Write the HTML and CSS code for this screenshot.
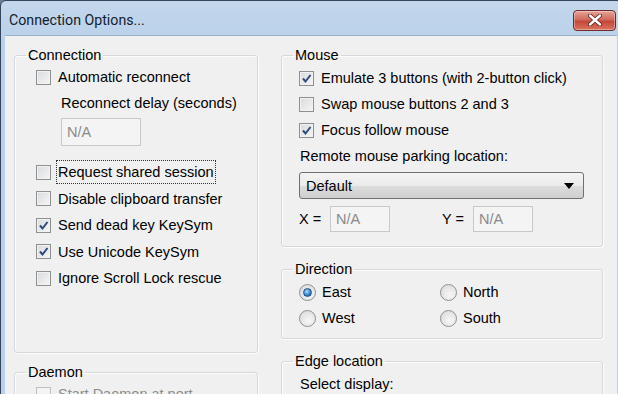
FILE: index.html
```html
<!DOCTYPE html>
<html lang="en">
<head>
    <meta charset="UTF-8">
    <title>Connection Options...</title>
    <link rel="stylesheet" href="styles.css">
</head>
<body>
    <div class="window">
        <div class="titlebar">
            <span class="title">Connection Options...</span>
            <span class="close">
                <svg width="20" height="12" viewBox="0 0 20 12">
                    <path d="M5 1.5 L15 10.5 M15 1.5 L5 10.5" stroke="#5a1e1e" stroke-width="4" stroke-linecap="round"/>
                    <path d="M5 1.5 L15 10.5 M15 1.5 L5 10.5" stroke="#fff" stroke-width="2.4" stroke-linecap="round"/>
                </svg>
            </span>
        </div>

        <div class="client">
            <!-- left column -->
            <div class="col">
                <fieldset class="group group-connection">
                    <legend>Connection</legend>
                    <div class="group-body conn-body">
                        <label class="row"><span class="box"></span>Automatic reconnect</label>
                        <div class="row indent">Reconnect delay (seconds)</div>
                        <div class="indent"><span class="field field-delay">N/A</span></div>
                        <label class="row row-shared"><span class="box"></span><span class="focus">Request shared session</span></label>
                        <label class="row row-tight"><span class="box"></span>Disable clipboard transfer</label>
                        <label class="row row-tight"><span class="box checked"><svg width="13" height="13" viewBox="0 0 13 13"><path d="M3 6.5 L5.5 9.5 L10.5 3" fill="none" stroke="#2e4a7a" stroke-width="2"/></svg></span>Send dead key KeySym</label>
                        <label class="row row-tight"><span class="box checked"><svg width="13" height="13" viewBox="0 0 13 13"><path d="M3 6.5 L5.5 9.5 L10.5 3" fill="none" stroke="#2e4a7a" stroke-width="2"/></svg></span>Use Unicode KeySym</label>
                        <label class="row row-tight"><span class="box"></span>Ignore Scroll Lock rescue</label>
                    </div>
                </fieldset>

                <fieldset class="group group-daemon">
                    <legend>Daemon</legend>
                    <div class="group-body conn-body">
                        <label class="row disabled"><span class="box"></span>Start Daemon at port</label>
                    </div>
                </fieldset>
            </div>

            <!-- right column -->
            <div class="col">
                <fieldset class="group group-mouse">
                    <legend>Mouse</legend>
                    <div class="group-body mouse-body">
                        <label class="row"><span class="box checked"><svg width="13" height="13" viewBox="0 0 13 13"><path d="M3 6.5 L5.5 9.5 L10.5 3" fill="none" stroke="#2e4a7a" stroke-width="2"/></svg></span>Emulate 3 buttons (with 2-button click)</label>
                        <label class="row"><span class="box"></span>Swap mouse buttons 2 and 3</label>
                        <label class="row"><span class="box checked"><svg width="13" height="13" viewBox="0 0 13 13"><path d="M3 6.5 L5.5 9.5 L10.5 3" fill="none" stroke="#2e4a7a" stroke-width="2"/></svg></span>Focus follow mouse</label>
                        <div class="row text-row">Remote mouse parking location:</div>
                        <div class="select">
                            <span>Default</span>
                            <svg width="10" height="6" viewBox="0 0 10 6"><path d="M0 0 H10 L5 6 Z" fill="#000"/></svg>
                        </div>
                        <div class="coords">
                            <div class="coord"><span class="coord-label">X =</span><span class="field field-coord">N/A</span></div>
                            <div class="coord"><span class="coord-label">Y =</span><span class="field field-coord">N/A</span></div>
                        </div>
                    </div>
                </fieldset>

                <fieldset class="group group-direction">
                    <legend>Direction</legend>
                    <div class="group-body mouse-body radios">
                        <label class="row"><span class="radio on"></span>East</label>
                        <label class="row"><span class="radio"></span>North</label>
                        <label class="row"><span class="radio"></span>West</label>
                        <label class="row"><span class="radio"></span>South</label>
                    </div>
                </fieldset>

                <fieldset class="group group-edge">
                    <legend>Edge location</legend>
                    <div class="group-body mouse-body">
                        <div class="row text-row">Select display:</div>
                    </div>
                </fieldset>
            </div>
        </div>
    </div>
</body>
</html>
```

FILE: styles.css
```css
body {
    margin: 0;
    background: #6d7f95;
    font-family: "Liberation Sans", Arial, sans-serif;
    font-size: 14.5px;
    color: #000;
    overflow: hidden;
}
.window {
    width: 612px;
    height: 420px;
    border: 1px solid #34455a;
    border-radius: 6px 6px 0 0;
    background: linear-gradient(to bottom, #c3d7ec, #b9d1ea 40px);
    padding: 0 5px 0 4px;
    display: flex;
    flex-direction: column;
}
.titlebar {
    height: 34px;
    display: flex;
    align-items: center;
    justify-content: space-between;
    flex-shrink: 0;
}
.title {
    font-family: Roboto, "Liberation Sans", sans-serif;
    font-size: 14.2px;
    color: #14202e;
    padding-left: 4px;
    margin-top: 4px;
}
.close {
    width: 41px;
    height: 19px;
    margin-top: 4px;
    margin-right: 1px;
    border: 1px solid #6b2a2a;
    border-radius: 4px;
    background: linear-gradient(to bottom, #e6a498, #d06a5c 45%, #c4483a 55%, #d9735f);
    display: flex;
    align-items: center;
    justify-content: center;
    box-shadow: inset 0 0 0 1px rgba(255,255,255,0.35);
}
.client {
    flex: 1;
    background: #f0f0f0;
    border-top: 1px solid #9bb2cc;
    display: flex;
    gap: 23px;
    padding: 10px 0 0 9px;
}
.col {
    display: flex;
    flex-direction: column;
}
.col:first-child {
    width: 244px;
}
.col:last-child {
    width: 322px;
}
.group {
    margin: 0;
    padding: 0;
    border: 1px solid #d5d9dd;
    border-radius: 3px;
    box-shadow: inset 1px 1px 0 #fcfcfc, 1px 1px 0 #fcfcfc;
    box-sizing: border-box;
    min-width: 0;
}
.group legend {
    margin-left: 11px;
    padding: 0 2px;
    line-height: 18px;
}
.group-connection {
    height: 307px;
}
.group-daemon {
    margin-top: 10px;
    height: 60px;
}
.group-mouse {
    height: 201px;
}
.group-direction {
    margin-top: 13px;
    height: 79px;
}
.group-edge {
    margin-top: 13px;
    height: 60px;
}
.group-body {
    display: flex;
    flex-direction: column;
}
.conn-body {
    padding-left: 21px;
}
.mouse-body {
    padding-left: 17px;
    padding-top: 1px;
}
.row {
    height: 26px;
    display: flex;
    align-items: center;
    white-space: nowrap;
}
.row-tight {
    height: 26.5px;
}
.row-shared {
    margin-top: 13px;
    height: 26.5px;
}
.indent {
    padding-left: 25px;
}
.text-row {
    padding-left: 1px;
}
.disabled {
    color: #8d8d8d;
}
.box {
    width: 13px;
    height: 13px;
    border: 1px solid #8e8f8f;
    background: linear-gradient(135deg, #d8dade, #f6f6f6);
    box-shadow: inset 0 0 0 1px #f2f2f2;
    margin-right: 7px;
    flex-shrink: 0;
    display: flex;
}
.disabled .box {
    border-color: #c0c0c0;
    background: #f4f4f4;
}
.focus {
    outline: 1px dotted #333;
    outline-offset: 1px;
    padding: 2px 0;
    line-height: 16px;
}
.field {
    display: inline-flex;
    align-items: center;
    box-sizing: border-box;
    border: 1px solid #c6c8ca;
    background: #f4f4f4;
    color: #8a8a8a;
    padding-left: 5px;
}
.field-delay {
    width: 80px;
    height: 28px;
    margin-top: 2px;
}
.field-coord {
    width: 60px;
    height: 26px;
}
.select {
    width: 285px;
    height: 27px;
    box-sizing: border-box;
    margin-top: 3px;
    border: 1px solid #707070;
    border-radius: 3px;
    background: linear-gradient(to bottom, #f4f4f4, #ebebeb 50%, #dddddd 50%, #cfcfcf);
    display: flex;
    align-items: center;
    justify-content: space-between;
    padding: 0 9px 0 6px;
}
.coords {
    display: flex;
    margin-top: 7px;
}
.coord {
    width: 143px;
    display: flex;
    align-items: center;
}
.coord-label {
    width: 31px;
}
.radios {
    display: grid;
    grid-template-columns: 141px auto;
}
.radio {
    width: 15px;
    height: 15px;
    border: 1px solid #8e8f8f;
    border-radius: 50%;
    background: radial-gradient(circle at 60% 65%, #f7f7f7, #d5d7da);
    margin-right: 6px;
    flex-shrink: 0;
    display: flex;
    align-items: center;
    justify-content: center;
}
.radio.on::after {
    content: "";
    width: 7px;
    height: 7px;
    border-radius: 50%;
    border: 1px solid #1d5281;
    background: radial-gradient(circle at 40% 35%, #a8dcff, #2e83c9 60%, #165a96);
}
```
